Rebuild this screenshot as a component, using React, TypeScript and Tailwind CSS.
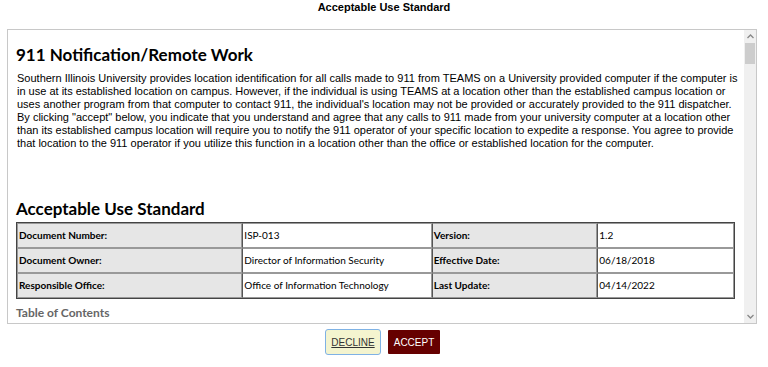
import React from "react";

const rows = [
  ["Document Number:", "ISP-013", "Version:", "1.2"],
  ["Document Owner:", "Director of Information Security", "Effective Date:", "06/18/2018"],
  ["Responsible Office:", "Office of Information Technology", "Last Update:", "04/14/2022"],
];

export default function App() {
  return (
    <div className="w-[768px] h-[367px] bg-white overflow-hidden" style={{ fontFamily: '"Liberation Sans", Arial, sans-serif' }}>
      <div className="h-[29px] pt-[1px] text-center text-[11px] font-bold text-black leading-[13px]">
        Acceptable Use Standard
      </div>
      <div className="ml-[7px] w-[750px] h-[295px] border border-[#c8c8c8] flex overflow-hidden">
        <div className="flex-1 overflow-hidden pl-[8px] pr-[6px] pt-[15px]">
          <h1 className="text-[17px] leading-[20px] font-bold text-black" style={{ fontFamily: 'Lato, "Open Sans", sans-serif' }}>
            911 Notification/Remote Work
          </h1>
          <p className="mt-[7px] pl-[1px] text-[11px] leading-[13px] text-black">
            Southern Illinois University provides location identification for all calls made to 911 from TEAMS on a University provided computer if the computer is in use at its established location on campus. However, if the individual is using TEAMS at a location other than the established campus location or uses another program from that computer to contact 911, the individual's location may not be provided or accurately provided to the 911 dispatcher. By clicking "accept" below, you indicate that you understand and agree that any calls to 911 made from your university computer at a location other than its established campus location will require you to notify the 911 operator of your specific location to expedite a response. You agree to provide that location to the 911 operator if you utilize this function in a location other than the office or established location for the computer.
          </p>
          <h2 className="mt-[49px] text-[17px] leading-[20px] font-bold text-black" style={{ fontFamily: 'Lato, "Open Sans", sans-serif' }}>
            Acceptable Use Standard
          </h2>
          <table className="mt-[3px] w-[719px] border-separate border-spacing-0 border border-[#444]" style={{ fontFamily: 'Lato, "Open Sans", sans-serif' }}>
            <colgroup>
              <col className="w-[226px]" />
              <col className="w-[190px]" />
              <col className="w-[166px]" />
              <col className="w-[137px]" />
            </colgroup>
            <tbody>
              {rows.map((r, i) => (
                <tr key={i} className="h-[25px]">
                  <td className="bg-[#e6e6e6] border border-[#999] pl-[1px] text-[10px] font-bold text-black">{r[0]}</td>
                  <td className="bg-white border border-[#999] border-l-[#555] pl-[1px] text-[10px] text-black">{r[1]}</td>
                  <td className="bg-[#e6e6e6] border border-[#999] border-l-[#555] pl-[1px] text-[10px] font-bold text-black">{r[2]}</td>
                  <td className="bg-white border border-[#999] border-l-[#555] pl-[1px] text-[10px] text-black">{r[3]}</td>
                </tr>
              ))}
            </tbody>
          </table>
          <div className="mt-[6px] text-[12px] leading-[16px] font-bold text-[#666]" style={{ fontFamily: 'Lato, "Open Sans", sans-serif' }}>
            Table of Contents
          </div>
        </div>
        <div className="w-[12px] bg-[#f0f0f0] flex flex-col items-center">
          <div className="h-[13px] flex items-center justify-center">
            <svg width="7" height="5" viewBox="0 0 7 5"><path d="M0.5 4 L3.5 1 L6.5 4" fill="none" stroke="#888" strokeWidth="1.3" /></svg>
          </div>
          <div className="w-[10px] h-[21px] bg-[#cdcdcd]" />
          <div className="flex-1" />
          <div className="h-[13px] flex items-center justify-center">
            <svg width="7" height="5" viewBox="0 0 7 5"><path d="M0.5 1 L3.5 4 L6.5 1" fill="none" stroke="#888" strokeWidth="1.3" /></svg>
          </div>
        </div>
      </div>
      <div className="flex justify-center gap-[7px] mt-[5px]">
        <button className="ml-[-3px] w-[56px] h-[26px] bg-[#f4f4cf] border border-[#7fb2e5] rounded-[3px] text-[10px] text-[#333] underline">
          DECLINE
        </button>
        <button className="mt-[1px] w-[52px] h-[24px] bg-[#660000] rounded-[1px] text-[10px] text-white">
          ACCEPT
        </button>
      </div>
    </div>
  );
}
